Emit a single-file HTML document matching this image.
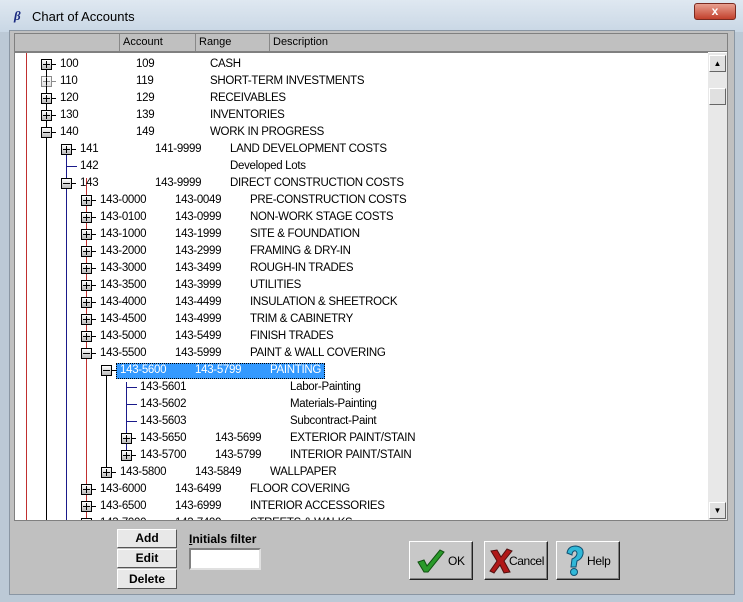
<!DOCTYPE html>
<html><head><meta charset="utf-8">
<style>
*{margin:0;padding:0;box-sizing:border-box}
body{width:743px;height:602px;overflow:hidden;background:#bcc9d6;font-family:"Liberation Sans",sans-serif;position:relative}
.abs{position:absolute}
#title{left:0;top:0;width:743px;height:32px;background:linear-gradient(#dfe8f1,#c9d7e5)}
#client{left:9px;top:30px;width:726px;height:565px;background:#c0c0c0;border:1px solid #8a96a3}
#hdr{left:15px;top:34px;width:712px;height:18px;background:#c0c0c0;border-bottom:1px solid #808080}
.hc{position:absolute;top:0;height:17px;font-size:11px;line-height:16px;color:#000;border-left:1px solid #888}
#tree{left:15px;top:52px;width:693px;height:468px;overflow:hidden;background:#fff;border-top:1px solid #808080}
#inner{position:absolute;left:-15px;top:-52px;width:743px;height:602px}
.t{position:absolute;font-size:11.5px;letter-spacing:-0.3px;line-height:17px;color:#000;white-space:nowrap}
.b{position:absolute;width:11px;height:11px;border:1px solid #000;background:linear-gradient(#fff,#bbb)}
.b::before{content:"";position:absolute;left:1px;top:4px;width:7px;height:1px;background:#000}
.b.p::after{content:"";position:absolute;left:4px;top:1px;width:1px;height:7px;background:#000}
.b i{position:absolute;left:10px;top:4px;width:4px;height:1px;background:#000}
.v{position:absolute;width:1px}
.h{position:absolute;height:1px}
#sb{left:708px;top:53px;width:19px;height:467px;background:#e8e8e8}
.btn{position:absolute;background:#e8e8e8;border:1px solid;border-color:#fff #555 #555 #fff;font-weight:bold;font-size:12px;text-align:center;color:#000}
.bb{position:absolute;top:541px;width:64px;height:39px;background:#c8c8c8;border:1px solid;border-color:#fff #222 #222 #fff;box-shadow:inset -1px -1px 0 #808080;font-size:12px}
</style></head><body>
<div class="abs" id="title"></div>
<div class="abs" style="left:14px;top:8px;width:11px;height:16px;font:italic bold 13px 'Liberation Serif',serif;color:#1a2a80">β</div>
<div class="abs" style="left:32px;top:9px;font-size:13px;color:#000">Chart of Accounts</div>
<div class="abs" style="left:694px;top:3px;width:42px;height:17px;background:linear-gradient(#e8a090,#c2402c);border:1px solid #7a2a20;border-radius:3px;color:#fff;font-size:12px;text-align:center;line-height:15px;font-weight:bold">x</div>
<div class="abs" id="client"></div>
<div class="abs" style="left:14px;top:33px;width:714px;height:488px;border:1px solid #808080;background:#fff"></div>
<div class="abs" id="hdr">
<div class="hc" style="left:104px;padding-left:3px;width:76px">Account</div>
<div class="hc" style="left:180px;padding-left:3px;width:75px">Range</div>
<div class="hc" style="left:254px;padding-left:3px;width:300px">Description</div>
</div>
<div class="abs" id="tree"><div id="inner">
<div class="v" style="left:26px;top:52px;height:470px;background:#c03030"></div>
<div class="v" style="left:46px;top:58px;height:470px;background:#000"></div>
<div class="v" style="left:66px;top:143px;height:400px;background:#1a1a8a"></div>
<div class="v" style="left:86px;top:177px;height:350px;background:#c03030"></div>
<div class="v" style="left:106px;top:364px;height:108px;background:#000"></div>
<div class="v" style="left:126px;top:381px;height:74px;background:#1a1a8a"></div>
<div class="h" style="left:67px;top:165px;width:10px;background:#1a1a8a"></div>
<div class="h" style="left:127px;top:386px;width:10px;background:#1a1a8a"></div>
<div class="h" style="left:127px;top:403px;width:10px;background:#1a1a8a"></div>
<div class="h" style="left:127px;top:420px;width:10px;background:#1a1a8a"></div>

<div class="b p" style="left:41px;top:58px"><i></i></div><div class="t" style="left:60px;top:55px">100</div><div class="t" style="left:136px;top:55px">109</div><div class="t" style="left:210px;top:55px">CASH</div>
<div class="b p" style="left:41px;top:75px;opacity:.45"><i></i></div><div class="t" style="left:60px;top:72px">110</div><div class="t" style="left:136px;top:72px">119</div><div class="t" style="left:210px;top:72px">SHORT-TERM INVESTMENTS</div>
<div class="b p" style="left:41px;top:92px"><i></i></div><div class="t" style="left:60px;top:89px">120</div><div class="t" style="left:136px;top:89px">129</div><div class="t" style="left:210px;top:89px">RECEIVABLES</div>
<div class="b p" style="left:41px;top:109px"><i></i></div><div class="t" style="left:60px;top:106px">130</div><div class="t" style="left:136px;top:106px">139</div><div class="t" style="left:210px;top:106px">INVENTORIES</div>
<div class="b" style="left:41px;top:126px"><i></i></div><div class="t" style="left:60px;top:123px">140</div><div class="t" style="left:136px;top:123px">149</div><div class="t" style="left:210px;top:123px">WORK IN PROGRESS</div>
<div class="b p" style="left:61px;top:143px"><i></i></div><div class="t" style="left:80px;top:140px">141</div><div class="t" style="left:155px;top:140px">141-9999</div><div class="t" style="left:230px;top:140px">LAND DEVELOPMENT COSTS</div>
<div class="t" style="left:80px;top:157px">142</div><div class="t" style="left:230px;top:157px">Developed Lots</div>
<div class="b" style="left:61px;top:177px"><i></i></div><div class="t" style="left:80px;top:174px">143</div><div class="t" style="left:155px;top:174px">143-9999</div><div class="t" style="left:230px;top:174px">DIRECT CONSTRUCTION COSTS</div>

<div class="b p" style="left:81px;top:194px"><i></i></div><div class="t" style="left:100px;top:191px">143-0000</div><div class="t" style="left:175px;top:191px">143-0049</div><div class="t" style="left:250px;top:191px">PRE-CONSTRUCTION COSTS</div>
<div class="b p" style="left:81px;top:211px"><i></i></div><div class="t" style="left:100px;top:208px">143-0100</div><div class="t" style="left:175px;top:208px">143-0999</div><div class="t" style="left:250px;top:208px">NON-WORK STAGE COSTS</div>
<div class="b p" style="left:81px;top:228px"><i></i></div><div class="t" style="left:100px;top:225px">143-1000</div><div class="t" style="left:175px;top:225px">143-1999</div><div class="t" style="left:250px;top:225px">SITE &amp; FOUNDATION</div>
<div class="b p" style="left:81px;top:245px"><i></i></div><div class="t" style="left:100px;top:242px">143-2000</div><div class="t" style="left:175px;top:242px">143-2999</div><div class="t" style="left:250px;top:242px">FRAMING &amp; DRY-IN</div>
<div class="b p" style="left:81px;top:262px"><i></i></div><div class="t" style="left:100px;top:259px">143-3000</div><div class="t" style="left:175px;top:259px">143-3499</div><div class="t" style="left:250px;top:259px">ROUGH-IN TRADES</div>
<div class="b p" style="left:81px;top:279px"><i></i></div><div class="t" style="left:100px;top:276px">143-3500</div><div class="t" style="left:175px;top:276px">143-3999</div><div class="t" style="left:250px;top:276px">UTILITIES</div>
<div class="b p" style="left:81px;top:296px"><i></i></div><div class="t" style="left:100px;top:293px">143-4000</div><div class="t" style="left:175px;top:293px">143-4499</div><div class="t" style="left:250px;top:293px">INSULATION &amp; SHEETROCK</div>
<div class="b p" style="left:81px;top:313px"><i></i></div><div class="t" style="left:100px;top:310px">143-4500</div><div class="t" style="left:175px;top:310px">143-4999</div><div class="t" style="left:250px;top:310px">TRIM &amp; CABINETRY</div>
<div class="b p" style="left:81px;top:330px"><i></i></div><div class="t" style="left:100px;top:327px">143-5000</div><div class="t" style="left:175px;top:327px">143-5499</div><div class="t" style="left:250px;top:327px">FINISH TRADES</div>
<div class="b" style="left:81px;top:347px"><i></i></div><div class="t" style="left:100px;top:344px">143-5500</div><div class="t" style="left:175px;top:344px">143-5999</div><div class="t" style="left:250px;top:344px">PAINT &amp; WALL COVERING</div>

<div class="abs" style="left:116px;top:362px;width:209px;height:16px;background:#3399ff;border:1px dotted #000"></div>
<div class="b" style="left:101px;top:364px"><i></i></div><div class="t" style="left:120px;top:361px;color:#fff">143-5600</div><div class="t" style="left:195px;top:361px;color:#fff">143-5799</div><div class="t" style="left:270px;top:361px;color:#fff">PAINTING</div>
<div class="t" style="left:140px;top:378px">143-5601</div><div class="t" style="left:290px;top:378px">Labor-Painting</div>
<div class="t" style="left:140px;top:395px">143-5602</div><div class="t" style="left:290px;top:395px">Materials-Painting</div>
<div class="t" style="left:140px;top:412px">143-5603</div><div class="t" style="left:290px;top:412px">Subcontract-Paint</div>
<div class="b p" style="left:121px;top:432px"><i></i></div><div class="t" style="left:140px;top:429px">143-5650</div><div class="t" style="left:215px;top:429px">143-5699</div><div class="t" style="left:290px;top:429px">EXTERIOR PAINT/STAIN</div>
<div class="b p" style="left:121px;top:449px"><i></i></div><div class="t" style="left:140px;top:446px">143-5700</div><div class="t" style="left:215px;top:446px">143-5799</div><div class="t" style="left:290px;top:446px">INTERIOR PAINT/STAIN</div>
<div class="b p" style="left:101px;top:466px"><i></i></div><div class="t" style="left:120px;top:463px">143-5800</div><div class="t" style="left:195px;top:463px">143-5849</div><div class="t" style="left:270px;top:463px">WALLPAPER</div>
<div class="b p" style="left:81px;top:483px"><i></i></div><div class="t" style="left:100px;top:480px">143-6000</div><div class="t" style="left:175px;top:480px">143-6499</div><div class="t" style="left:250px;top:480px">FLOOR COVERING</div>
<div class="b p" style="left:81px;top:500px"><i></i></div><div class="t" style="left:100px;top:497px">143-6500</div><div class="t" style="left:175px;top:497px">143-6999</div><div class="t" style="left:250px;top:497px">INTERIOR ACCESSORIES</div>
<div class="b p" style="left:81px;top:517px"><i></i></div><div class="t" style="left:100px;top:514px">143-7000</div><div class="t" style="left:175px;top:514px">143-7499</div><div class="t" style="left:250px;top:514px">STREETS &amp; WALKS</div>
</div></div>

<div class="abs" id="sb"></div>
<div class="abs" style="left:709px;top:55px;width:17px;height:17px;background:#e0e0e0;border:1px solid;border-color:#fff #666 #666 #fff;font-size:8px;text-align:center;line-height:15px">▲</div>
<div class="abs" style="left:709px;top:88px;width:17px;height:17px;background:#e0e0e0;border:1px solid;border-color:#fff #666 #666 #fff"></div>
<div class="abs" style="left:709px;top:502px;width:17px;height:17px;background:#e0e0e0;border:1px solid;border-color:#fff #666 #666 #fff;font-size:8px;text-align:center;line-height:15px">▼</div>

<div class="btn" style="left:117px;top:529px;width:60px;height:19px;line-height:17px">Add</div>
<div class="btn" style="left:117px;top:549px;width:60px;height:19px;line-height:17px">Edit</div>
<div class="btn" style="left:117px;top:569px;width:60px;height:20px;line-height:18px">Delete</div>
<div class="abs" style="left:189px;top:532px;font-size:12px;font-weight:bold"><u>I</u>nitials filter</div>
<div class="abs" style="left:189px;top:548px;width:72px;height:22px;background:#fff;border:2px solid;border-color:#808080 #e0e0e0 #e0e0e0 #808080"></div>

<div class="bb" style="left:409px">
<svg class="abs" style="left:6px;top:6px" width="30" height="26" viewBox="0 0 30 26"><path d="M2 14 L8 12 L11 18 L24 2 L28 4 L12 24 L8 24 Z" fill="#2a9a2a" stroke="#105010" stroke-width="1"/></svg>
<span class="abs" style="left:38px;top:12px;letter-spacing:-0.3px">OK</span></div>
<div class="bb" style="left:484px">
<svg class="abs" style="left:3px;top:6px" width="26" height="26" viewBox="0 0 26 26"><path d="M3 3 L9 2 L13 9 L19 1 L24 3 L16 13 L22 24 L16 25 L12 17 L6 25 L2 23 L9 13 Z" fill="#b01818" stroke="#501010" stroke-width="1"/></svg>
<span class="abs" style="left:24px;top:12px;letter-spacing:-0.4px">Cancel</span></div>
<div class="bb" style="left:556px">
<svg class="abs" style="left:7px;top:3px" width="22" height="32" viewBox="0 0 22 32"><path d="M3 8 Q4 1 12 1 Q20 2 19 9 Q18 14 13 16 L12 22 L7 22 L8 14 Q13 12 13 8 Q12 5 10 6 Q8 7 8 10 Z" fill="#30b8d8" stroke="#105070"/><circle cx="10" cy="27" r="3.5" fill="#30b8d8" stroke="#105070"/></svg>
<span class="abs" style="left:30px;top:12px;letter-spacing:-0.3px">Help</span></div>
</body></html>
